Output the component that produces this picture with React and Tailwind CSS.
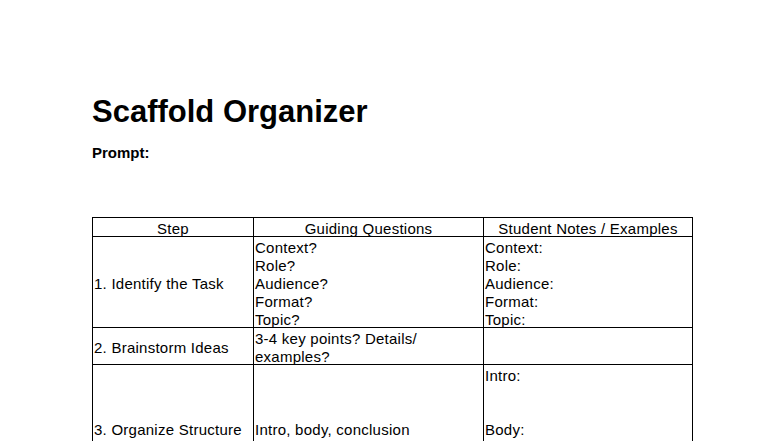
const rows = [
  {
    step: '1. Identify the Task',
    questions: ['Context?', 'Role?', 'Audience?', 'Format?', 'Topic?'],
    notes: ['Context:', 'Role:', 'Audience:', 'Format:', 'Topic:'],
  },
  {
    step: '2. Brainstorm Ideas',
    questions: ['3-4 key points? Details/', 'examples?'],
    notes: [],
  },
  {
    step: '3. Organize Structure',
    questions: ['Intro, body, conclusion'],
    notes: ['Intro:', '', '', 'Body:', '', '', 'Conclusion:'],
  },
];

// each line is 18px tall, text sits a little low like the original render
function Lines({ items }) {
  return items.map((t, i) => (
    <div key={i} className="h-[18px] pt-[3px] leading-[15px] whitespace-nowrap">
      {t}
    </div>
  ));
}

export default function App() {
  return (
    <div className="min-h-screen bg-white text-black font-['Liberation_Sans',Arial,sans-serif]">
      <div className="mx-auto w-[600px] pt-[94px]">
        <h1 className="text-[31px] font-bold leading-[35px]">Scaffold Organizer</h1>
        <p className="mt-[15px] text-[15px] font-bold leading-[18px]">Prompt:</p>
        <table className="mt-[55px] w-[600px] border-collapse text-[15px] leading-[18px] tracking-[0.25px] table-fixed">
          <colgroup>
            <col className="w-[161px]" />
            <col className="w-[230px]" />
            <col className="w-[209px]" />
          </colgroup>
          <thead>
            <tr>
              <th className="border border-black font-normal text-center p-0">
                <Lines items={['Step']} />
              </th>
              <th className="border border-black font-normal text-center p-0">
                <Lines items={['Guiding Questions']} />
              </th>
              <th className="border border-black font-normal text-center p-0">
                <Lines items={['Student Notes / Examples']} />
              </th>
            </tr>
          </thead>
          <tbody>
            {rows.map((r) => (
              <tr key={r.step}>
                <td className="border border-black p-0 pl-[1px] align-middle">
                  <Lines items={[r.step]} />
                </td>
                <td className="border border-black p-0 pl-[1px] align-middle">
                  <Lines items={r.questions} />
                </td>
                <td className="border border-black p-0 pl-[1px] align-top">
                  <Lines items={r.notes} />
                </td>
              </tr>
            ))}
          </tbody>
        </table>
      </div>
    </div>
  );
}
